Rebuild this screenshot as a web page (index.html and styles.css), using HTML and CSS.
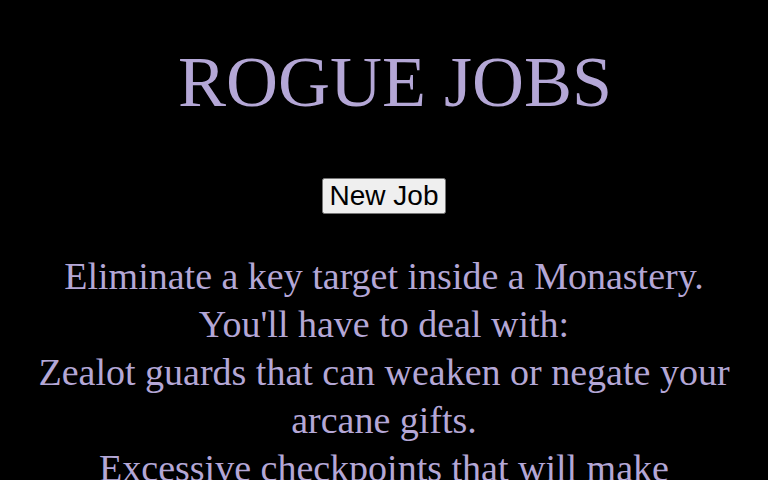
FILE: index.html
```html
<!DOCTYPE html>
<html lang="en">
<head>
    <meta charset="UTF-8">
    <meta name="viewport" content="width=device-width, initial-scale=1.0">
    <title>Rogue Jobs</title>
    <link rel="stylesheet" href="styles.css">
</head>
<body>

<div class="container">
    <h1 class="title">ROGUE JOBS</h1>

    <button type="button" id="newJobBtn">New Job</button>

    <div id="jobText" class="job">
        Eliminate a key target inside a Monastery.<br>
        You'll have to deal with:<br>
        Zealot guards that can weaken or negate your arcane gifts.<br>
        Excessive checkpoints that will make movement difficult.
    </div>
</div>

</body>
</html>
```

FILE: styles.css
```css
body {
    font-family: "Liberation Serif", "Times New Roman", serif;
    background-color: #000;
    color: #b4a7d6;
    margin: 0;
    padding: 0;
}

.container {
    text-align: center;
    padding: 0 32px;
}

.title {
    font-size: 72px;
    font-weight: normal;
    margin: 0;
    padding: 41px 0 54px 22px;
}

#newJobBtn {
    font-family: "Liberation Sans", Arial, sans-serif;
    font-size: 28px;
    padding: 0 6px;
    margin: 0;
}

.job {
    font-size: 38px;
    line-height: 48px;
    margin-top: 38px;
}
```
